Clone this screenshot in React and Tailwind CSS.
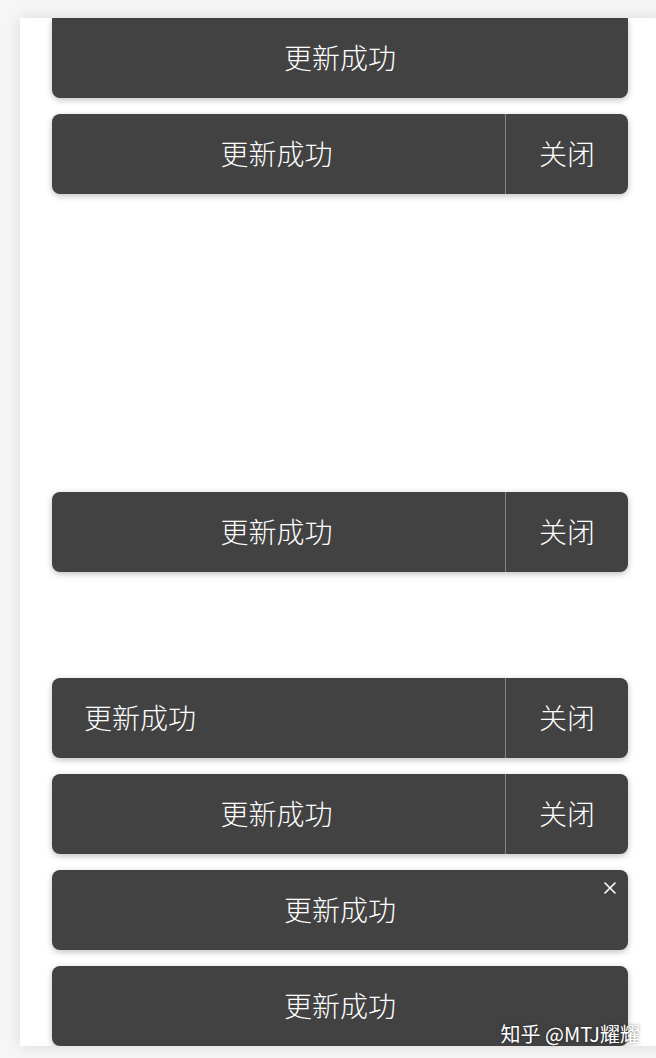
import React from 'react';

const font = { fontFamily: '"Noto Sans CJK SC", "Noto Sans", sans-serif' };

function Toast({ align = 'center', action, close, className = '' }) {
  return (
    <div
      className={`relative flex h-20 w-full items-stretch rounded-lg bg-[#424242] text-white shadow-[0_2px_6px_rgba(0,0,0,0.25)] ${className}`}
    >
      <div
        className={`flex flex-1 items-center pb-[2px] text-[28px] font-light ${
          align === 'left' ? 'justify-start pl-8' : action ? 'justify-center pr-1' : 'justify-center'
        }`}
      >
        更新成功
      </div>
      {action && (
        <div className="flex w-[123px] items-center justify-center border-l border-[#858585] pb-[2px] text-[28px] font-light">
          关闭
        </div>
      )}
      {close && (
        <svg
          className="absolute right-[12px] top-[12px]"
          width="12"
          height="12"
          viewBox="0 0 12 12"
          fill="none"
          stroke="white"
          strokeWidth="1.6"
          strokeLinecap="round"
        >
          <path d="M1 1L11 11M11 1L1 11" />
        </svg>
      )}
    </div>
  );
}

export default function App() {
  return (
    <div className="relative h-[1058px] w-[656px] overflow-hidden bg-[#f6f6f6]" style={font}>
      <div className="ml-5 mt-[18px] h-[1028px] w-[640px] overflow-hidden bg-white px-8 shadow-[0_0_14px_rgba(0,0,0,0.12)]">
        <Toast className="rounded-t-none" />
        <Toast action className="mt-4" />
        <Toast action className="mt-[298px]" />
        <Toast action align="left" className="mt-[106px]" />
        <Toast action className="mt-4" />
        <Toast close className="mt-4" />
        <Toast className="mt-4" />
      </div>
      <div className="absolute bottom-[14px] right-[16px] text-[20px] leading-none text-white [text-shadow:0_0_3px_rgba(0,0,0,0.5)]">
        知乎 @MTJ耀耀
      </div>
    </div>
  );
}
